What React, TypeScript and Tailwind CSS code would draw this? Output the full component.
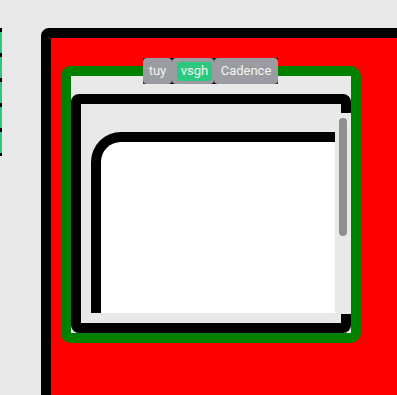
import React from "react";

export default function App() {
  const dashes = [0, 1, 2, 3, 4];
  return (
    <div
      className="w-[397px] h-[395px] overflow-hidden bg-[#e9e9e9] flex items-start pt-[28px]"
      style={{ fontFamily: "Roboto, 'Liberation Sans', sans-serif" }}
    >
      <div className="flex flex-col w-[2px] shrink-0">
        {dashes.map((d) => (
          <div key={d} className="flex flex-col">
            <div className="h-[4px] bg-black" />
            <div className="h-[21px] bg-[#2bc97f]" />
          </div>
        ))}
        <div className="h-[3px] bg-black" />
      </div>
      <div className="ml-[39px] shrink-0 w-[420px] h-[420px] border-[10px] border-black rounded-lg bg-[#ff0000] pl-[10px] pt-[28px]">
        <div className="relative w-[300px] h-[277px] border-[10px] border-[#008000] rounded-[10px] bg-[#e9e9e9] pt-[18px]">
          <div className="absolute left-[72px] top-[-18px] flex bg-black rounded-[1px] h-[26px]">
            <div className="w-[29px] h-[26px] bg-[#9a9ca1] rounded-[4px] flex items-center justify-center text-[13px] text-[#f4f4f4]">
              tuy
            </div>
            <div className="w-[42px] h-[26px] bg-[#9a9ca1] rounded-[4px] flex items-center pl-[5px]">
              <div className="w-[35px] h-[19px] bg-[#2bc97f] rounded-[3px] flex items-center justify-center text-[13px] text-[#f4f4f4]">
                vsgh
              </div>
            </div>
            <div className="w-[64px] h-[26px] bg-[#9a9ca1] rounded-[4px] flex items-center justify-center text-[13px] text-[#f4f4f4]">
              Cadence
            </div>
          </div>
          <div className="relative w-[280px] h-[239px] border-[10px] border-black rounded-lg bg-[#e9e9e9] pl-[10px] pt-[28px]">
            <div className="w-[244px] h-[181px] bg-white border-l-[10px] border-t-[10px] border-black rounded-tl-[30px]" />
            <div className="absolute left-[254px] top-[9px] w-[16px] h-[201px] bg-[#e9e9e9]">
              <div className="ml-[4px] mt-[5px] w-[8px] h-[118px] rounded-full bg-[#8f8f8f]" />
            </div>
          </div>
        </div>
      </div>
    </div>
  );
}
